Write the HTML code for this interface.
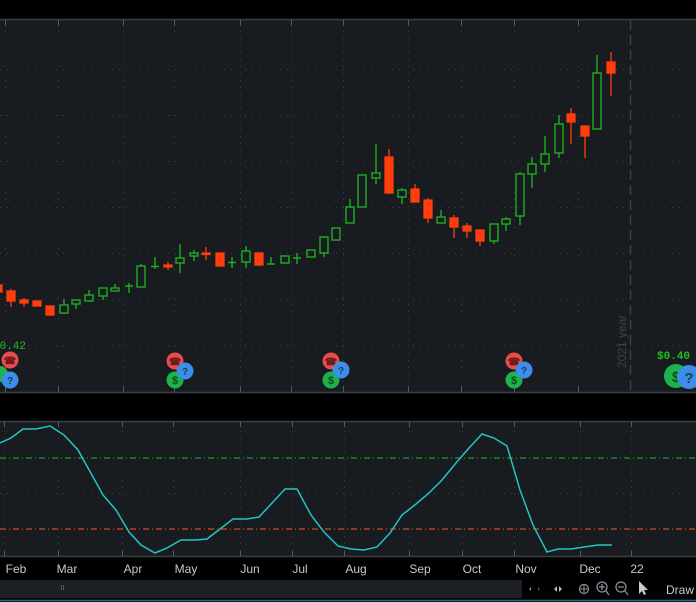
<!DOCTYPE html>
<html><head><meta charset="utf-8"><style>
html,body{margin:0;padding:0;background:#000;width:696px;height:602px;overflow:hidden}
svg{display:block}
text{font-family:"Liberation Sans",sans-serif}
</style></head><body>
<svg width="696" height="602" viewBox="0 0 696 602" xmlns="http://www.w3.org/2000/svg">
<rect width="696" height="602" fill="#000"/>
<rect x="0" y="20" width="696" height="372" fill="#181c20"/>
<line x1="0" y1="19.5" x2="696" y2="19.5" stroke="#3c4046" stroke-width="1.5"/>
<line x1="0" y1="392.5" x2="696" y2="392.5" stroke="#3c4046" stroke-width="1.5"/>
<g stroke="#3a3f45" stroke-width="1" stroke-dasharray="1,6">
<line x1="0" x2="696" y1="69.5" y2="69.5"/><line x1="0" x2="696" y1="115.5" y2="115.5"/>
<line x1="0" x2="696" y1="161.5" y2="161.5"/><line x1="0" x2="696" y1="207.5" y2="207.5"/>
<line x1="0" x2="696" y1="253.5" y2="253.5"/><line x1="0" x2="696" y1="299.5" y2="299.5"/>
<line x1="0" x2="696" y1="345.5" y2="345.5"/>
</g>
<g stroke="#3a3f45" stroke-width="1" stroke-dasharray="1,6">
<line y1="24" y2="390" x1="5.5" x2="5.5"/><line y1="24" y2="390" x1="58.5" x2="58.5"/>
<line y1="24" y2="390" x1="123.5" x2="123.5"/><line y1="24" y2="390" x1="174.5" x2="174.5"/>
<line y1="24" y2="390" x1="240.5" x2="240.5"/><line y1="24" y2="390" x1="291.5" x2="291.5"/>
<line y1="24" y2="390" x1="343.5" x2="343.5"/><line y1="24" y2="390" x1="408.5" x2="408.5"/>
<line y1="24" y2="390" x1="461.5" x2="461.5"/><line y1="24" y2="390" x1="514.5" x2="514.5"/>
<line y1="24" y2="390" x1="578.5" x2="578.5"/>
</g>
<line x1="630.5" x2="630.5" y1="20" y2="392" stroke="#3a3f45" stroke-width="1.5" stroke-dasharray="10,5"/>
<g stroke="#555a60" stroke-width="1">
<path d="M5.5 20v6M58.5 20v6M123.5 20v6M174.5 20v6M240.5 20v6M291.5 20v6M343.5 20v6M408.5 20v6M461.5 20v6M514.5 20v6M578.5 20v6"/>
<path d="M5.5 386v6M58.5 386v6M123.5 386v6M174.5 386v6M240.5 386v6M291.5 386v6M343.5 386v6M408.5 386v6M461.5 386v6M514.5 386v6M578.5 386v6"/>
</g>
<text x="0" y="0" transform="translate(626,368) rotate(-90)" font-size="12" fill="#3e4349">2021 year</text>
<g stroke="#ff3d0d" fill="#ff3d0d" stroke-width="1.3">
<rect x="-3" y="285" width="5" height="7"/>
<line x1="11" x2="11" y1="289" y2="307"/><rect x="7" y="291" width="8" height="10"/>
<line x1="24" x2="24" y1="298" y2="307"/><rect x="20" y="300" width="8" height="3"/>
<rect x="33" y="301" width="8" height="5"/>
<line x1="50" x2="50" y1="306" y2="316"/><rect x="46" y="306" width="8" height="9"/>
<line x1="168" x2="168" y1="262" y2="270"/><rect x="164" y="265" width="8" height="2"/>
<line x1="206" x2="206" y1="247" y2="260"/><rect x="202" y="253" width="8" height="1.5"/>
<rect x="216" y="253" width="8" height="13"/>
<rect x="255" y="253" width="8" height="12"/>
<line x1="389" x2="389" y1="149" y2="193"/><rect x="385" y="157" width="8" height="36"/>
<line x1="415" x2="415" y1="184" y2="202"/><rect x="411" y="189" width="8" height="13"/>
<line x1="428" x2="428" y1="198" y2="223"/><rect x="424" y="200" width="8" height="18"/>
<line x1="454" x2="454" y1="215" y2="238"/><rect x="450" y="218" width="8" height="9"/>
<line x1="467" x2="467" y1="223" y2="238"/><rect x="463" y="226" width="8" height="5"/>
<line x1="480" x2="480" y1="230" y2="246"/><rect x="476" y="230" width="8" height="11"/>
<line x1="571" x2="571" y1="108" y2="144"/><rect x="567" y="114" width="8" height="8"/>
<line x1="585" x2="585" y1="126" y2="158"/><rect x="581" y="126" width="8" height="10"/>
<line x1="611" x2="611" y1="52" y2="96"/><rect x="607" y="62" width="8" height="11"/>
</g>
<g stroke="#1fae1f" fill="none" stroke-width="1.4">
<path d="M64 299v6M64 313v1"/><rect x="60" y="305" width="8" height="8"/>
<path d="M76 304v5"/><rect x="72" y="300" width="8" height="4"/>
<path d="M89 290v5"/><rect x="85" y="295" width="8" height="6"/>
<path d="M103 296v4"/><rect x="99" y="288" width="8" height="8"/>
<path d="M115 284v4"/><rect x="111" y="288" width="8" height="3"/>
<path d="M129 283v10M125 286h8"/>
<path d="M141 264v2"/><rect x="137" y="266" width="8" height="21"/>
<path d="M155 257v12M151 266.5h8"/>
<path d="M180 244v14M180 263v10"/><rect x="176" y="258" width="8" height="5"/>
<path d="M194 250v3M194 256v5"/><rect x="190" y="253" width="8" height="3"/>
<path d="M232 257v11M228 262.5h8"/>
<path d="M246 246v5M246 262v6"/><rect x="242" y="251" width="8" height="11"/>
<path d="M271 257v7M267 264h8"/>
<rect x="281" y="256" width="8" height="7"/>
<path d="M297 253v11M293 258h8"/>
<rect x="307" y="250" width="8" height="7"/>
<path d="M324 236v1M324 253v4"/><rect x="320" y="237" width="8" height="16"/>
<rect x="332" y="228" width="8" height="12"/>
<path d="M350 199v8"/><rect x="346" y="207" width="8" height="16"/>
<rect x="358" y="175" width="8" height="32"/>
<path d="M376 144v29M376 178v6"/><rect x="372" y="173" width="8" height="5"/>
<path d="M402 188v2M402 197v7"/><rect x="398" y="190" width="8" height="7"/>
<path d="M441 210v7"/><rect x="437" y="217" width="8" height="6"/>
<path d="M494 241v3"/><rect x="490" y="224" width="8" height="17"/>
<path d="M506 217v2M506 224v7"/><rect x="502" y="219" width="8" height="5"/>
<path d="M520 172v2M520 216v9"/><rect x="516" y="174" width="8" height="42"/>
<path d="M532 157v7M532 174v14"/><rect x="528" y="164" width="8" height="10"/>
<path d="M545 136v18M545 164v8"/><rect x="541" y="154" width="8" height="10"/>
<path d="M559 115v9M559 153v5"/><rect x="555" y="124" width="8" height="29"/>
<path d="M597 55v18"/><rect x="593" y="73" width="8" height="56"/>
</g>
<text x="-7" y="349" style="font-family:'Liberation Mono',monospace;font-size:11px" fill="#1fbf1f">$0.42</text>
<text x="657" y="359" style="font-family:'Liberation Mono',monospace;font-size:11px;font-weight:bold" fill="#1fbf1f">$0.40</text>
<g font-weight="bold" text-anchor="middle">
<circle cx="0" cy="374" r="8" fill="#1db34a"/>
<circle cx="10" cy="360" r="8.5" fill="#e84b4b"/><text x="10" y="364" font-size="10" fill="#6b1d1d">☎</text>
<circle cx="10" cy="380" r="8.5" fill="#3d8ee6"/><text x="10" y="384" font-size="10" fill="#163b63">?</text>
<circle cx="175" cy="380" r="8.5" fill="#1db34a"/><text x="175" y="384" font-size="11" fill="#0d4d1e">$</text>
<circle cx="175" cy="361" r="8.5" fill="#e84b4b"/><text x="175" y="365" font-size="10" fill="#6b1d1d">☎</text>
<circle cx="185" cy="371" r="8.5" fill="#3d8ee6"/><text x="185" y="375" font-size="10" fill="#163b63">?</text>
<circle cx="331" cy="380" r="8.5" fill="#1db34a"/><text x="331" y="384" font-size="11" fill="#0d4d1e">$</text>
<circle cx="331" cy="361" r="8.5" fill="#e84b4b"/><text x="331" y="365" font-size="10" fill="#6b1d1d">☎</text>
<circle cx="341" cy="370" r="8.5" fill="#3d8ee6"/><text x="341" y="374" font-size="10" fill="#163b63">?</text>
<circle cx="514" cy="380" r="8.5" fill="#1db34a"/><text x="514" y="384" font-size="11" fill="#0d4d1e">$</text>
<circle cx="514" cy="361" r="8.5" fill="#e84b4b"/><text x="514" y="365" font-size="10" fill="#6b1d1d">☎</text>
<circle cx="524" cy="370" r="8.5" fill="#3d8ee6"/><text x="524" y="374" font-size="10" fill="#163b63">?</text>
<circle cx="676" cy="376" r="12" fill="#1db34a"/><text x="676" y="382" font-size="15" fill="#0d4d1e">$</text>
<circle cx="689" cy="377" r="12" fill="#3d8ee6"/><text x="689" y="383" font-size="15" fill="#163b63">?</text>
</g>
<rect x="0" y="422" width="696" height="134" fill="#181c20"/>
<line x1="0" y1="421.5" x2="696" y2="421.5" stroke="#3c4046" stroke-width="1.5"/>
<line x1="0" y1="556.5" x2="696" y2="556.5" stroke="#3c4046" stroke-width="1.5"/>
<g stroke="#3a3f45" stroke-width="1" stroke-dasharray="1,6">
<line x1="0" x2="696" y1="493.5" y2="493.5"/>
<line y1="424" y2="555" x1="4.5" x2="4.5"/><line y1="424" y2="555" x1="58.5" x2="58.5"/>
<line y1="424" y2="555" x1="122.5" x2="122.5"/><line y1="424" y2="555" x1="173.5" x2="173.5"/>
<line y1="424" y2="555" x1="240.5" x2="240.5"/><line y1="424" y2="555" x1="292.5" x2="292.5"/>
<line y1="424" y2="555" x1="344.5" x2="344.5"/><line y1="424" y2="555" x1="409.5" x2="409.5"/>
<line y1="424" y2="555" x1="462.5" x2="462.5"/><line y1="424" y2="555" x1="514.5" x2="514.5"/>
<line y1="424" y2="555" x1="580.5" x2="580.5"/><line y1="424" y2="555" x1="631.5" x2="631.5"/>
</g>
<g stroke="#555a60" stroke-width="1">
<path d="M4.5 422v5M58.5 422v5M122.5 422v5M173.5 422v5M240.5 422v5M292.5 422v5M344.5 422v5M409.5 422v5M462.5 422v5M514.5 422v5M580.5 422v5M631.5 422v5"/>
<path d="M4.5 551v5M58.5 551v5M122.5 551v5M173.5 551v5M240.5 551v5M292.5 551v5M344.5 551v5M409.5 551v5M462.5 551v5M514.5 551v5M580.5 551v5M631.5 551v5"/>
</g>
<line x1="0" x2="696" y1="458" y2="458" stroke="#1aa31a" stroke-width="1.2" stroke-dasharray="6,3,1,3"/>
<line x1="0" x2="696" y1="529" y2="529" stroke="#d6451c" stroke-width="1.2" stroke-dasharray="6,3,1,3"/>
<polyline fill="none" stroke="#22c4c4" stroke-width="1.5" points="0,443 11,438 23,429 36,429 50,426 64,435 78,450 103,495 116,510 129,532 141,545 155,553 167,548 181,540 195,540 207,539 220,529 233,519 247,519 259,517 273,502 285,489 297,489 311,515 324,532 338,546 351,549 364,550 377,547 390,533 402,515 416,504 429,493 442,480 456,463 469,448 482,434 494,438 507,446 520,490 533,525 547,552 558,549 571,549 584,547 598,545 612,545"/>
<g font-size="12" fill="#c3cad2" text-anchor="middle">
<text x="16" y="573">Feb</text><text x="67" y="573">Mar</text><text x="133" y="573">Apr</text>
<text x="186" y="573">May</text><text x="250" y="573">Jun</text><text x="300" y="573">Jul</text>
<text x="356" y="573">Aug</text><text x="420" y="573">Sep</text><text x="472" y="573">Oct</text>
<text x="526" y="573">Nov</text><text x="590" y="573">Dec</text><text x="637" y="573">22</text>
</g>
<rect x="0" y="580" width="522" height="18" fill="#1c1f23"/>
<path d="M61.5 585v5M63.5 585v5" stroke="#555" stroke-width="1"/>
<g fill="#8a9099" stroke="#8a9099">
<path d="M531 587l-2 2 2 2z" stroke="none"/><path d="M538 587l2 2-2 2z" stroke="none" fill="#555"/>
<path d="M554 589l3-3v6zM562 589l-3-3v6z" stroke="none" fill="#b8bdc4"/>
<circle cx="584" cy="589" r="4.5" fill="none" stroke-width="1.2"/><path d="M579 589h10M584 584v10" stroke-width="1"/>
<circle cx="602" cy="587" r="5" fill="none" stroke-width="1.3"/><path d="M599 587h6M602 584v6M606 591l3 4" stroke-width="1.3"/>
<circle cx="621" cy="587" r="5" fill="none" stroke-width="1.3"/><path d="M618 587h6M625 591l3 4" stroke-width="1.3"/>
<path d="M639 581v13l3-3 2 4 2-1-2-4h4z" stroke="none" fill="#c8ccd2"/>
</g>
<text x="666" y="594" font-size="12" fill="#c3cad2">Draw</text>
<line x1="0" x2="696" y1="600.5" y2="600.5" stroke="#1c6e92" stroke-width="1.5"/>
</svg>
</body></html>
